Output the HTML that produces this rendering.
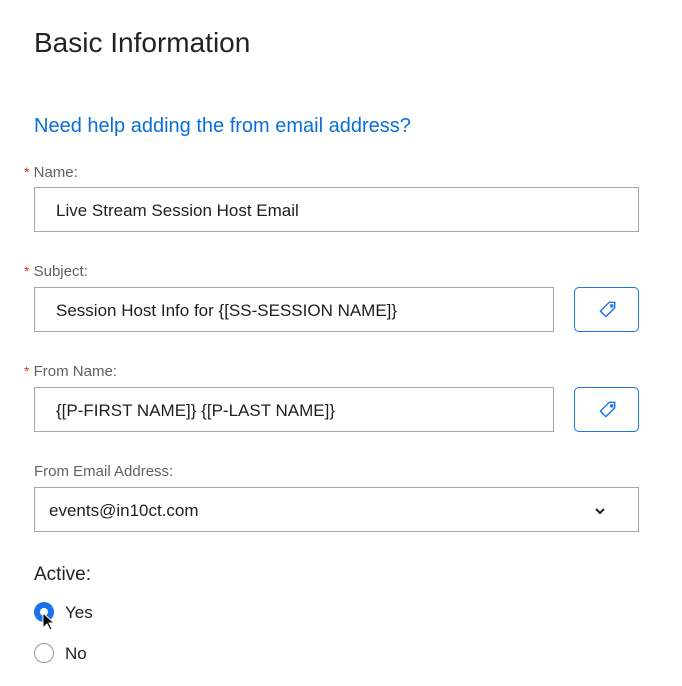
<!DOCTYPE html>
<html><head><style>
body{margin:0;width:682px;height:686px;background:#fff;font-family:"Liberation Sans",sans-serif;position:relative;overflow:hidden}
.a{position:absolute}
.lbl{font-size:15px;color:#5f6166}
.star{color:#d93a1a;font-size:14px}
.box{position:absolute;border:1px solid #a6a6a6;box-sizing:border-box;height:45px;font-size:17px;color:#1e1e1e;line-height:45px}
.btn{position:absolute;left:574px;width:65px;height:45px;border:1px solid #1a73e8;border-radius:5px;box-sizing:border-box}
</style></head><body>
<div class="a" style="left:34px;top:27px;font-size:28px;color:#222">Basic Information</div>
<div class="a" style="left:34px;top:115px;font-size:20px;color:#0a6fd9">Need help adding the from email address?</div>

<div class="a lbl" style="left:24px;top:164px"><span class="star">*</span> Name:</div>
<div class="box" style="left:34px;top:187px;width:605px;padding-left:21px">Live Stream Session Host Email</div>

<div class="a lbl" style="left:24px;top:263px"><span class="star">*</span> Subject:</div>
<div class="box" style="left:34px;top:287px;width:520px;padding-left:21px">Session Host Info for {[SS-SESSION NAME]}</div>
<div class="btn" style="top:287px"><svg class="a" style="left:21px;top:11px" width="22" height="22" viewBox="0 0 20 20" fill="none" stroke="#1a73e8" stroke-width="1.3"><path d="M12 3h5v5l-8 8-5-5z"/><rect x="13.5" y="5.5" width="1.6" height="1.6"/></svg></div>

<div class="a lbl" style="left:24px;top:363px"><span class="star">*</span> From Name:</div>
<div class="box" style="left:34px;top:387px;width:520px;padding-left:21px">{[P-FIRST NAME]} {[P-LAST NAME]}</div>
<div class="btn" style="top:387px"><svg class="a" style="left:21px;top:11px" width="22" height="22" viewBox="0 0 20 20" fill="none" stroke="#1a73e8" stroke-width="1.3"><path d="M12 3h5v5l-8 8-5-5z"/><rect x="13.5" y="5.5" width="1.6" height="1.6"/></svg></div>

<div class="a lbl" style="left:34px;top:463px">From Email Address:</div>
<div class="box" style="left:34px;top:487px;width:605px;padding-left:14px">events@in10ct.com
<svg class="a" style="left:559px;top:19px" width="12" height="8" viewBox="0 0 12 8"><path d="M2 2l4 4 4-4" fill="none" stroke="#222" stroke-width="2"/></svg></div>

<div class="a" style="left:34px;top:564px;font-size:19px;color:#222">Active:</div>
<div class="a" style="left:34px;top:602px;width:20px;height:20px;border-radius:50%;background:#1a73e8"><div class="a" style="left:6px;top:6px;width:8px;height:8px;border-radius:50%;background:#fff"></div></div>
<svg class="a" style="left:42px;top:612px" width="14" height="20" viewBox="0 0 14 20"><path d="M1 1v15l4-4 3 6 2-1-3-6h5z" fill="#000" stroke="#fff" stroke-width="1"/></svg>
<div class="a" style="left:65px;top:603px;font-size:17px;color:#222">Yes</div>
<div class="a" style="left:34px;top:643px;width:20px;height:20px;border-radius:50%;border:1px solid #999;box-sizing:border-box"></div>
<div class="a" style="left:65px;top:644px;font-size:17px;color:#222">No</div>
</body></html>
